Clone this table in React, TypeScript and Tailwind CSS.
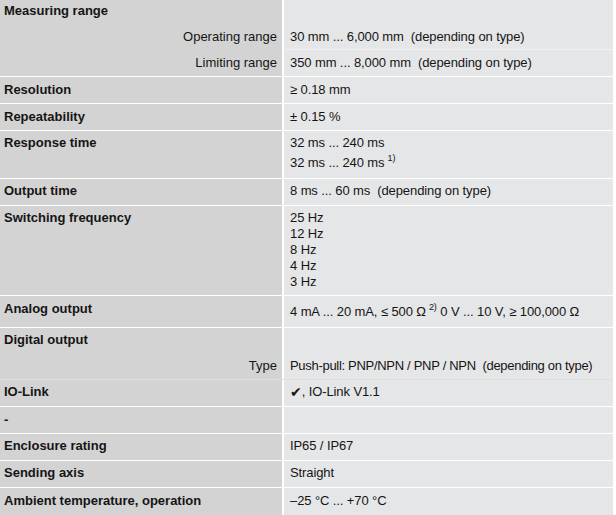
const font = { fontFamily: '"Liberation Sans", Arial, sans-serif' };

function Sup({ children }: { children: React.ReactNode }) {
  return <span className="relative -top-[6px] ml-[3px] text-[9px]">{children}</span>;
}

interface RowProps {
  label: React.ReactNode;
  children?: React.ReactNode;
  pt?: string;
  pb?: string;
  valuePt?: string;
  border?: string;
}

function Row({ label, children, pt = "pt-[5px]", pb = "pb-[5px]", valuePt, border = "border-white" }: RowProps) {
  return (
    <div className={`flex border-b ${border}`}>
      <div className={`w-[282px] shrink-0 bg-[#d3d3d3] px-[4px] font-bold ${pt} ${pb}`}>{label}</div>
      <div className={`flex-1 whitespace-nowrap border-l-2 border-white bg-[#e5e6e7] pl-[6px] tracking-[-0.1px] ${valuePt ?? pt} ${pb}`}>
        {children}
      </div>
    </div>
  );
}

function SubRow({ label, children, pt = "pt-[5px]", pb = "pb-[5px]", line }: { label: string; children: React.ReactNode; pt?: string; pb?: string; line?: boolean }) {
  return (
    <div className="flex">
      <div className={`w-[282px] shrink-0 bg-[#d3d3d3] pr-[5px] text-right ${pt} ${pb}`}>{label}</div>
      <div
        className={`flex-1 whitespace-nowrap border-l-2 border-white bg-[#e5e6e7] pl-[6px] tracking-[-0.1px] ${pt} ${pb} ${
          line ? "border-b border-b-[#f0f0f0]" : ""
        }`}
      >
        {children}
      </div>
    </div>
  );
}

function GroupHeader({ label, pt = "pt-[3px]", pb = "pb-[5px]" }: { label: string; pt?: string; pb?: string }) {
  return (
    <div className="flex">
      <div className={`w-[282px] shrink-0 bg-[#d3d3d3] px-[4px] font-bold ${pt} ${pb}`}>{label}</div>
      <div className={`flex-1 border-l-2 border-white bg-[#e5e6e7] ${pt} ${pb}`}>&nbsp;</div>
    </div>
  );
}

export default function App() {
  return (
    <div className="min-h-screen bg-white">
      <div className="w-[613px] text-[13px] leading-4 text-[#151515]" style={font}>
        {/* Measuring range */}
        <div className="border-b border-white">
          <GroupHeader label="Measuring range" pt="pt-[3px]" pb="pb-[5px]" />
          <SubRow label="Operating range" pb="pb-[4px]" line>
            30 mm ... 6,000 mm&nbsp; (depending on type)
          </SubRow>
          <SubRow label="Limiting range">350 mm ... 8,000 mm&nbsp; (depending on type)</SubRow>
        </div>

        <Row label="Resolution">≥ 0.18 mm</Row>
        <Row label="Repeatability">± 0.15 %</Row>
        <Row label="Response time" pt="pt-[4px]" pb="pb-[6px]">
          <div>32 ms ... 240 ms</div>
          <div className="mt-[4px]">
            32 ms ... 240 ms<Sup>1)</Sup>
          </div>
        </Row>
        <Row label="Output time" pt="pt-[4px]" pb="pb-[6px]">
          8 ms ... 60 ms&nbsp; (depending on type)
        </Row>
        <Row label="Switching frequency" pt="pt-[4px]">
          <div>25 Hz</div>
          <div>12 Hz</div>
          <div>8 Hz</div>
          <div>4 Hz</div>
          <div>3 Hz</div>
        </Row>
        <Row label="Analog output" valuePt="pt-[8px]" pb="pb-[6px]">
          4 mA ... 20 mA, ≤ 500 Ω<Sup>2)</Sup> 0 V ... 10 V, ≥ 100,000 Ω
        </Row>

        {/* Digital output */}
        <div className="border-b border-[#dedede]">
          <GroupHeader label="Digital output" pt="pt-[4px]" pb="pb-[5px]" />
          <SubRow label="Type">
            <span className="tracking-[-0.3px]">Push-pull: PNP/NPN / PNP / NPN&nbsp; (depending on type)</span>
          </SubRow>
        </div>

        <Row label="IO-Link" pt="pt-[4px]" pb="pb-[6px]">
          <span
            style={{ fontFamily: '"DejaVu Sans", sans-serif' }}
            className="inline-block h-4 align-top text-[14px] leading-4"
          >
            ✔
          </span>
          , IO-Link V1.1
        </Row>
        <Row label="-">&nbsp;</Row>
        <Row label="Enclosure rating" pt="pt-[4px]" pb="pb-[6px]">
          IP65 / IP67
        </Row>
        <Row label="Sending axis" pt="pt-[4px]" pb="pb-[6px]">
          Straight
        </Row>
        <Row label="Ambient temperature, operation" pb="pb-[8px]">
          –25 °C ... +70 °C
        </Row>
      </div>
    </div>
  );
}
